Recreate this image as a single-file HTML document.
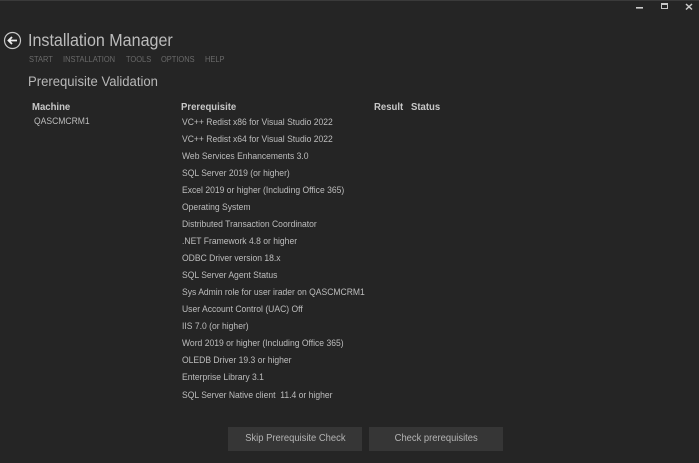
<!DOCTYPE html>
<html><head><meta charset="utf-8">
<style>
html,body{margin:0;padding:0;}
body{width:699px;height:463px;background:#252525;overflow:hidden;position:relative;font-family:"Liberation Sans",sans-serif;color:#c4c4c4;}
.t{position:absolute;white-space:pre;line-height:14px;transform-origin:0 50%;}
.r{font-size:9.6px;color:#bdbdbd;left:182px;margin-top:-.6px;transform:scaleX(.893);}
.h{font-size:10.5px;font-weight:bold;color:#c8c8c8;top:99.5px;transform:scaleX(.91);}
.n{font-size:8.7px;color:#6a6a6a;top:52px;transform:scaleX(.86);}
.b{position:absolute;top:427px;height:24px;width:134px;background:#363636;color:#b4b4b4;text-align:center;font:10px/23px "Liberation Sans",sans-serif;}
.b span{display:inline-block;transform:scaleX(.94);}
</style></head><body>
<div style="position:absolute;left:0;top:0;width:699px;height:1px;background:#3a3a3a"></div>
<svg style="position:absolute;left:0;top:0" width="699" height="60">
<circle cx="12.5" cy="40.5" r="8" fill="none" stroke="#c8c8c8" stroke-width="1.2"/>
<path d="M8.5 40.5H17M12 37L8.5 40.5L12 44" fill="none" stroke="#eee" stroke-width="1.8"/>
<rect x="636" y="7" width="7" height="1.6" fill="#ccc"/>
<rect x="661.5" y="3.5" width="6" height="5" fill="none" stroke="#c8c8c8" stroke-width="1"/><rect x="661" y="3" width="7" height="2" fill="#c8c8c8"/>
<path d="M686 4L692 9.5M692 4L686 9.5" stroke="#ccc" stroke-width="1.5"/>
</svg>
<div class="t" style="left:28px;top:29px;font:17.3px/22px 'Liberation Sans',sans-serif;color:#bcbcbc;transform:scaleX(.93)">Installation Manager</div>
<div class="t n" style="left:29px">START</div>
<div class="t n" style="left:63px">INSTALLATION</div>
<div class="t n" style="left:126px">TOOLS</div>
<div class="t n" style="left:160.5px">OPTIONS</div>
<div class="t n" style="left:205px">HELP</div>
<div class="t" style="left:28px;top:73px;font:13.4px/18px 'Liberation Sans',sans-serif;color:#b8b8b8;transform:scaleX(.977)">Prerequisite Validation</div>
<div class="t h" style="left:32px">Machine</div>
<div class="t h" style="left:181px">Prerequisite</div>
<div class="t h" style="left:374px">Result</div>
<div class="t h" style="left:411px">Status</div>
<div class="t r" style="left:34px;top:116px">QASCMCRM1</div>
<div class="t r" style="top:116.5px">VC++ Redist x86 for Visual Studio 2022</div>
<div class="t r" style="top:133.5px">VC++ Redist x64 for Visual Studio 2022</div>
<div class="t r" style="top:150.5px">Web Services Enhancements 3.0</div>
<div class="t r" style="top:167.5px">SQL Server 2019 (or higher)</div>
<div class="t r" style="top:184.5px">Excel 2019 or higher (Including Office 365)</div>
<div class="t r" style="top:201.5px">Operating System</div>
<div class="t r" style="top:218.5px">Distributed Transaction Coordinator</div>
<div class="t r" style="top:235.5px">.NET Framework 4.8 or higher</div>
<div class="t r" style="top:252.5px">ODBC Driver version 18.x</div>
<div class="t r" style="top:269.5px">SQL Server Agent Status</div>
<div class="t r" style="top:286.5px">Sys Admin role for user irader on QASCMCRM1</div>
<div class="t r" style="top:303.5px">User Account Control (UAC) Off</div>
<div class="t r" style="top:320.5px">IIS 7.0 (or higher)</div>
<div class="t r" style="top:337.5px">Word 2019 or higher (Including Office 365)</div>
<div class="t r" style="top:354.5px">OLEDB Driver 19.3 or higher</div>
<div class="t r" style="top:371.5px">Enterprise Library 3.1</div>
<div class="t r" style="top:389.5px">SQL Server Native client  11.4 or higher</div>
<div class="b" style="left:228px"><span>Skip Prerequisite Check</span></div>
<div class="b" style="left:369px"><span>Check prerequisites</span></div>
</body></html>
